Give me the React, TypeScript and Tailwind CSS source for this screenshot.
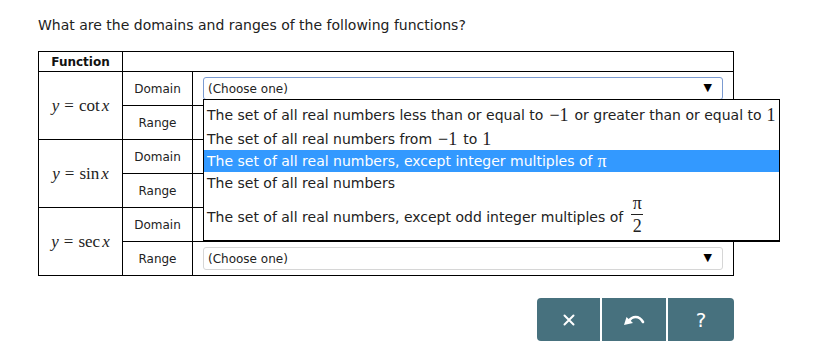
import React from "react";

const sans = "font-['DejaVu_Sans',Verdana,sans-serif]";
const serif = "font-['Liberation_Serif','Times_New_Roman',serif]";

const Fn = ({ name }: { name: string }) => (
  <span className={`${serif} text-[17px] text-[#222]`}>
    <i>y</i>
    <span className="mx-[5px]">=</span>
    {name}
    <i className="ml-[2px]">x</i>
  </span>
);

const Select = ({ focused, children }: { focused?: boolean; children?: React.ReactNode }) => (
  <div className="relative">
    <div
      className={`h-[23px] flex items-center justify-between pl-[4px] pr-[10px] rounded-[3px] bg-white border ${
        focused ? "border-[#7b9bd1]" : "border-[#d6d6d6]"
      }`}
    >
      <span className="text-[12px] text-[#222]">(Choose one)</span>
      <span className="text-[11px] text-black">▼</span>
    </div>
    {children}
  </div>
);

const DropList = () => (
  <div className="absolute left-0 top-[22px] w-[577px] bg-white border border-black border-b-2 z-10 text-[14px] text-[#222] whitespace-nowrap">
    <div className="h-[28px] pt-[2px] flex items-center px-[3px]">
      The set of all real numbers less than or equal to
      <span className={`${serif} text-[18px] mx-[6px]`}>−1</span>
      or greater than or equal to
      <span className={`${serif} text-[18px] ml-[5px]`}>1</span>
    </div>
    <div className="h-[22px] flex items-center px-[3px]">
      The set of all real numbers from
      <span className={`${serif} text-[18px] mx-[6px]`}>−1</span>
      to
      <span className={`${serif} text-[18px] ml-[5px]`}>1</span>
    </div>
    <div className="h-[22px] flex items-center px-[3px] bg-[#3399ff] text-white">
      The set of all real numbers, except integer multiples of
      <span className={`${serif} text-[18px] ml-[5px]`}>π</span>
    </div>
    <div className="h-[22px] flex items-center px-[3px]">The set of all real numbers</div>
    <div className="h-[46px] flex items-center px-[3px]">
      <span>The set of all real numbers, except odd integer multiples of</span>
      <span
        className={`${serif} text-[18px] ml-[8px] -mt-[6px] inline-flex flex-col items-center leading-[18px]`}
      >
        <span>π</span>
        <span className="w-[12px] my-[2px] border-t border-[#222]" />
        <span>2</span>
      </span>
    </div>
  </div>
);

const rows = ["cot", "sin", "sec"];

export default function App() {
  return (
    <div className={`${sans} pl-[38px] pt-[17px] bg-white min-h-[351px]`}>
      <div className="w-[696px]">
        <div className="text-[14px] leading-[17px] text-[#222]">
          What are the domains and ranges of the following functions?
        </div>
        <table className="mt-[17px] w-[696px] table-fixed border-collapse border border-black">
          <colgroup>
            <col className="w-[84px]" />
            <col className="w-[70px]" />
            <col />
          </colgroup>
          <thead>
            <tr className="h-[20px]">
              <th className="border border-black text-[12px] font-bold text-[#111] p-0">Function</th>
              <th colSpan={2} className="border border-black p-0" />
            </tr>
          </thead>
          <tbody>
            {rows.map((r, i) => (
              <React.Fragment key={r}>
                <tr className="h-[34px]">
                  <td rowSpan={2} className="border border-black text-center p-0">
                    <Fn name={r} />
                  </td>
                  <td className="border border-black text-center text-[12px] text-[#222] p-0">Domain</td>
                  <td className="border border-black px-[10px] py-0">
                    {i === 0 ? (
                      <Select focused>
                        <DropList />
                      </Select>
                    ) : i < 2 ? null : (
                      <Select />
                    )}
                  </td>
                </tr>
                <tr className="h-[34px]">
                  <td className="border border-black text-center text-[12px] text-[#222] p-0">Range</td>
                  <td className="border border-black px-[10px] py-0">{i === 2 ? <Select /> : null}</td>
                </tr>
              </React.Fragment>
            ))}
          </tbody>
        </table>
        <div className="flex justify-end mt-[22px]">
          <div className="flex h-[43px] rounded-[4px] overflow-hidden bg-[#47717e]">
            <button className="w-[65px] flex items-center justify-center border-r-2 border-white">
              <svg width="12" height="12" viewBox="0 0 12 12">
                <path d="M1.5 1.5 L10.5 10.5 M10.5 1.5 L1.5 10.5" stroke="white" strokeWidth="2" strokeLinecap="round" />
              </svg>
            </button>
            <button className="w-[66px] flex items-center justify-center border-r-2 border-white">
              <svg width="24" height="14" viewBox="0 0 24 14">
                <path d="M7 8 C10 3 17 2 21 9" stroke="white" strokeWidth="2.6" fill="none" strokeLinecap="round" />
                <path d="M2 12 L4.5 4 L11 10 Z" fill="white" />
              </svg>
            </button>
            <button className="w-[66px] flex items-center justify-center text-white text-[20px] font-['DejaVu_Sans',sans-serif]">
              ?
            </button>
          </div>
        </div>
      </div>
    </div>
  );
}
